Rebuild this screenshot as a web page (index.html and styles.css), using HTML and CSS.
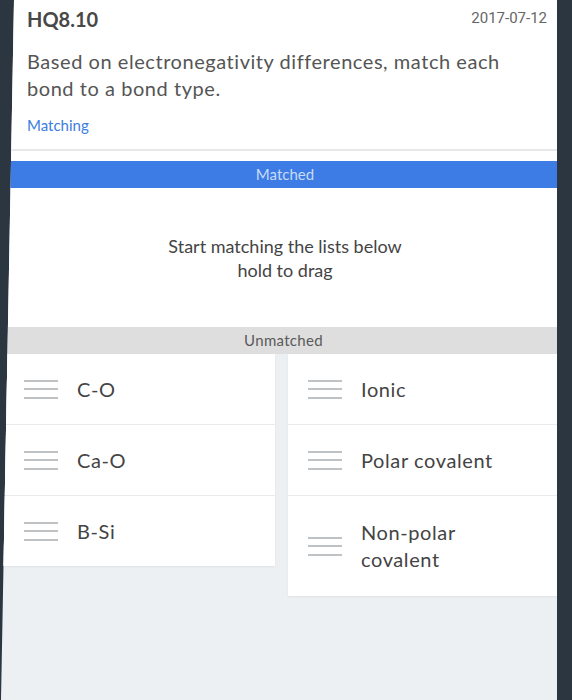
FILE: index.html
```html
<!DOCTYPE html>
<html>
<head>
<meta charset="utf-8">
<link rel="stylesheet" href="styles.css">
</head>
<body>
<div class="screen">
  <header class="head">
    <div class="head-inner">
      <div class="head-top">
        <h1 class="qid">HQ8.10</h1>
        <span class="date">2017-07-12</span>
      </div>
      <p class="question">Based on electronegativity differences, match each bond to a bond type.</p>
      <div class="qtype">Matching</div>
    </div>
  </header>
  <div class="matched-bar">Matched</div>
  <div class="matched-area">
    <p>Start matching the lists below<br>hold to drag</p>
  </div>
  <div class="unmatched-bar">Unmatched</div>
  <div class="lists">
    <div class="col col-left">
      <div class="card"><span class="handle"><i></i><i></i><i></i></span><span class="label">C-O</span></div>
      <div class="card"><span class="handle"><i></i><i></i><i></i></span><span class="label">Ca-O</span></div>
      <div class="card"><span class="handle"><i></i><i></i><i></i></span><span class="label">B-Si</span></div>
    </div>
    <div class="col col-right">
      <div class="card"><span class="handle"><i></i><i></i><i></i></span><span class="label">Ionic</span></div>
      <div class="card"><span class="handle"><i></i><i></i><i></i></span><span class="label">Polar covalent</span></div>
      <div class="card card-tall"><span class="handle"><i></i><i></i><i></i></span><span class="label">Non-polar<br>covalent</span></div>
    </div>
  </div>
</div>
</body>
</html>
```
FILE: styles.css
```css
html, body {
  margin: 0;
  padding: 0;
}
body {
  background: #2b3640;
  width: 572px;
  height: 700px;
  overflow: hidden;
  font-family: Lato, "Open Sans", sans-serif;
}
.screen {
  width: 557px;
  height: 700px;
  background: #edf0f3;
  clip-path: polygon(14px 0, 100% 0, 100% 100%, 1px 100%);
  display: flex;
  flex-direction: column;
}
.head {
  background: #fff;
  height: 161px;
  box-sizing: border-box;
}
.head-inner {
  height: 151px;
  box-sizing: border-box;
  padding: 7px 10px 0 27px;
  border-bottom: 2px solid #e8e8e8;
}
.head-top {
  display: flex;
  justify-content: space-between;
  align-items: flex-start;
}
.qid {
  margin: 0;
  font-size: 20px;
  font-weight: 700;
  color: #484848;
  line-height: 24px;
}
.date {
  font-family: Roboto, "Liberation Sans", sans-serif;
  font-size: 15px;
  color: #666;
  line-height: 18px;
  padding-top: 2px;
}
.question {
  margin: 17px 0 0 0;
  max-width: 486px;
  font-size: 20px;
  letter-spacing: 0.55px;
  line-height: 27px;
  color: #555;
}
.qtype {
  margin-top: 14px;
  font-size: 15px;
  color: #3b7de0;
}
.matched-bar {
  height: 27px;
  padding-left: 13px;
  background: #3c7ce4;
  color: #c9daf7;
  font-size: 15px;
  line-height: 27px;
  text-align: center;
}
.matched-area {
  background: #fff;
  height: 139px;
  padding-left: 13px;
  display: flex;
  align-items: center;
  justify-content: center;
}
.matched-area p {
  margin: 0;
  text-align: center;
  font-size: 18px;
  line-height: 24px;
  color: #444;
}
.unmatched-bar {
  height: 27px;
  padding-left: 10px;
  background: #dedede;
  color: #5a5a5a;
  font-size: 15px;
  letter-spacing: 0.3px;
  line-height: 27px;
  text-align: center;
}
.lists {
  display: flex;
  gap: 13px;
  align-items: flex-start;
}
.col {
  display: flex;
  flex-direction: column;
  gap: 1px;
  box-shadow: 0 1px 2px rgba(0,0,0,0.06);
}
.col-left {
  width: 275px;
  background: #e8eaec;
}
.col-right {
  flex: 1;
  background: #e8eaec;
}
.card {
  background: #fff;
  height: 70px;
  display: flex;
  align-items: center;
}
.card-tall {
  height: 100px;
}
.col-left .handle {
  margin-left: 24px;
}
.col-right .handle {
  margin-left: 20px;
}
.handle {
  width: 34px;
  display: flex;
  flex-direction: column;
  gap: 6.5px;
  margin-right: 19px;
}
.handle i {
  display: block;
  height: 2px;
  background: #bfc2c5;
}
.label {
  font-size: 20px;
  letter-spacing: 0.6px;
  line-height: 27px;
  color: #444;
}
```
